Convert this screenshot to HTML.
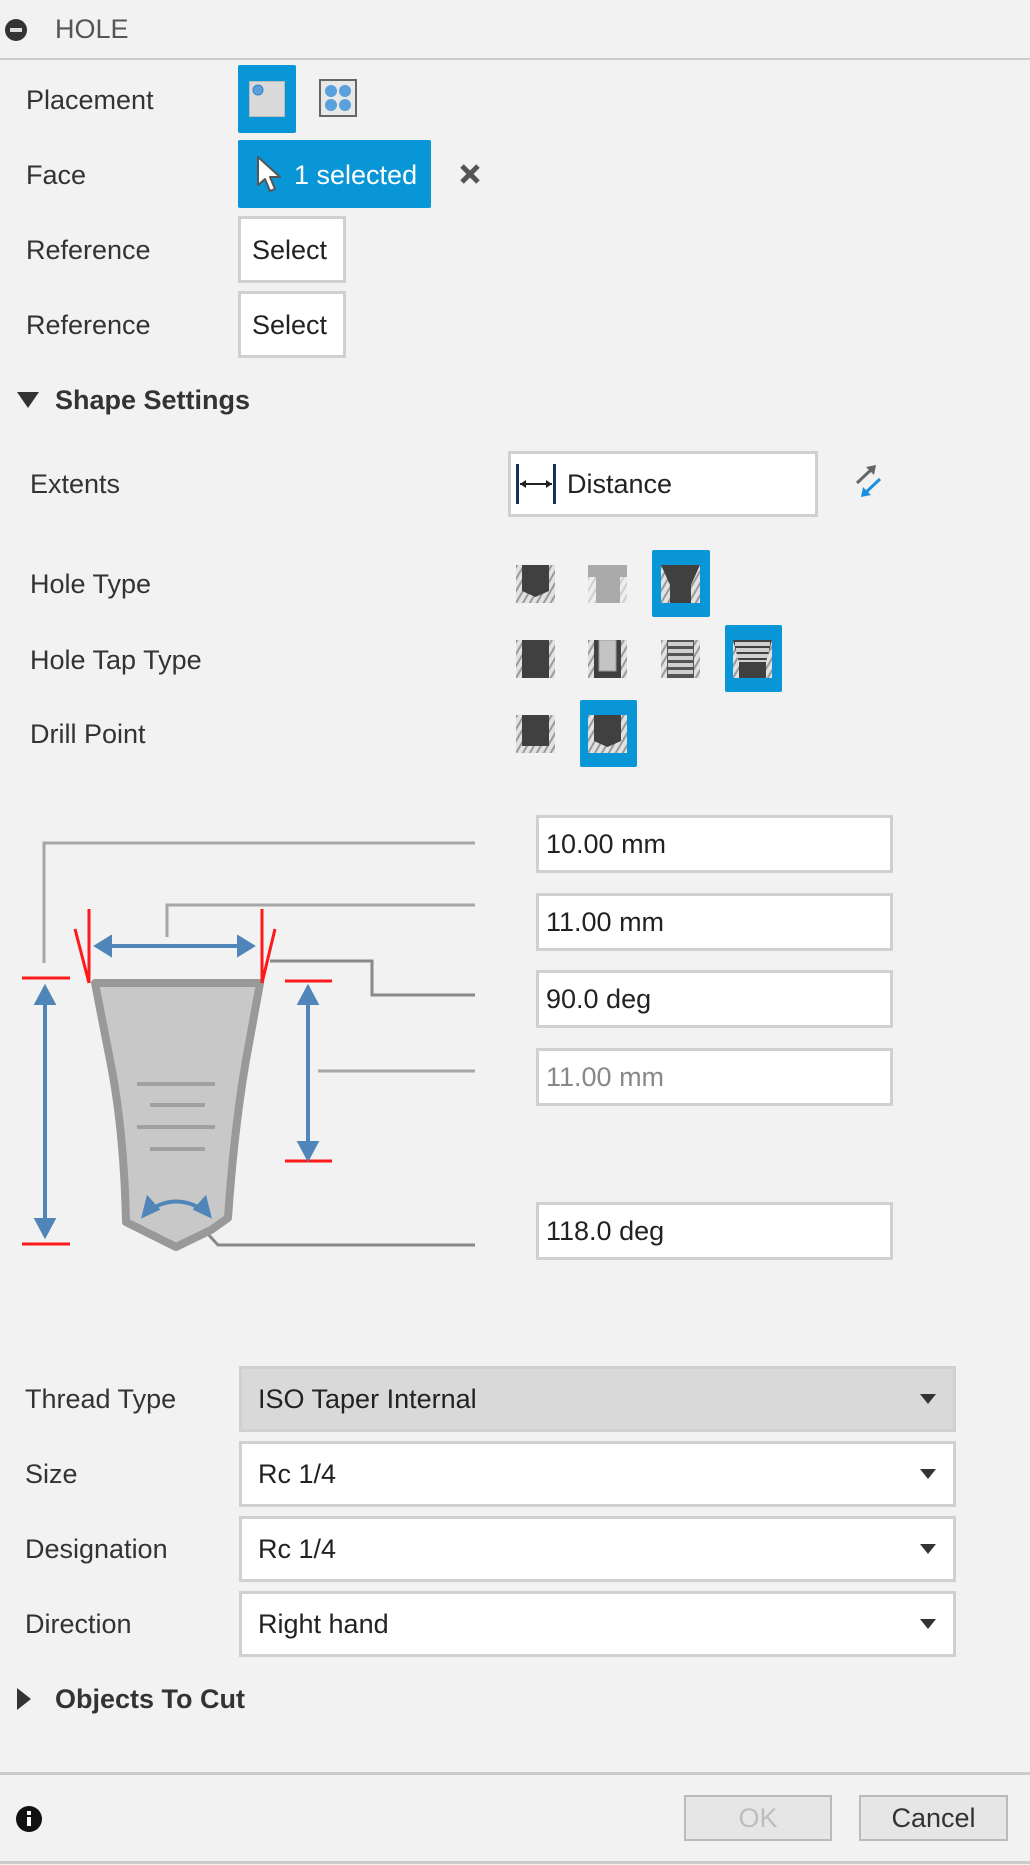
<!DOCTYPE html>
<html><head><meta charset="utf-8"><style>
*{margin:0;padding:0;box-sizing:border-box}
body{width:1030px;height:1865px;background:#f2f2f2;position:relative;overflow:hidden;font-family:"Liberation Sans",Arial,sans-serif;color:#333;font-size:27px}
.a{position:absolute}
.l{position:absolute;height:32px;line-height:32px;white-space:nowrap;color:#333}
.box{position:absolute;background:#fff;border:3px solid #d0d0d0}
.inp{position:absolute;background:#fff;border:3px solid #d0d0d0;left:536px;width:357px;height:58px;line-height:52px;padding-left:7px;color:#222}
.dd{position:absolute;left:239px;width:717px;height:66px;background:#fff;border:3px solid #d0d0d0;line-height:60px;padding-left:16px;color:#222}
.dd:after{content:"";position:absolute;right:17px;top:25px;border-left:8px solid transparent;border-right:8px solid transparent;border-top:10px solid #333}
.blue{position:absolute;background:#0896d6;border-radius:2px}
</style></head><body>
<svg width="0" height="0" style="position:absolute"><defs>
<pattern id="h" width="6" height="6" patternUnits="userSpaceOnUse" patternTransform="rotate(30)"><rect width="6" height="6" fill="#e2e2e2"/><rect width="2" height="6" fill="#9a9a9a"/></pattern>
<pattern id="h2" width="6" height="6" patternUnits="userSpaceOnUse" patternTransform="rotate(30)"><rect width="6" height="6" fill="#eeeeee"/><rect width="2" height="6" fill="#cfcfcf"/></pattern>
</defs></svg>

<svg class="a" style="left:4px;top:18px" width="24" height="24"><circle cx="12" cy="12" r="11" fill="#333"/><rect x="6" y="10" width="12" height="4" fill="#ddd"/></svg>
<div class="l" style="left:55px;top:13px;color:#555;font-size:27px">HOLE</div>
<div class="a" style="left:0;top:58px;width:1030px;height:2px;background:#ccc"></div>

<div class="l" style="left:26px;top:84px">Placement</div>
<div class="blue" style="left:238px;top:65px;width:58px;height:68px"></div>
<div class="a" style="left:249px;top:81px;width:36px;height:36px;background:#d9d9d9;border:1px solid #bbb"></div>
<svg class="a" style="left:249px;top:81px" width="36" height="36"><circle cx="9" cy="9" r="5" fill="#5aa0dc" stroke="#3b7fc0"/></svg>
<svg class="a" style="left:319px;top:79px" width="38" height="38"><rect x="1" y="1" width="36" height="36" fill="#e8e8e8" stroke="#666" stroke-width="2"/><circle cx="12" cy="12" r="6" fill="#5aa0dc"/><circle cx="26" cy="12" r="6" fill="#5aa0dc"/><circle cx="12" cy="26" r="6" fill="#5aa0dc"/><circle cx="26" cy="26" r="6" fill="#5aa0dc"/></svg>

<div class="l" style="left:26px;top:159px">Face</div>
<div class="blue" style="left:238px;top:140px;width:193px;height:68px"></div>
<svg class="a" style="left:256px;top:155px" width="28" height="40"><path d="M2 2 L2 30 L9 24 L14 36 L19 34 L14 22 L24 22 Z" fill="#fff" stroke="#555" stroke-width="2" stroke-linejoin="round"/></svg>
<div class="l" style="left:294px;top:159px;color:#fff">1 selected</div>
<svg class="a" style="left:459px;top:163px" width="22" height="22"><path d="M3 3 L19 19 M19 3 L3 19" stroke="#555" stroke-width="5"/></svg>

<div class="l" style="left:26px;top:234px">Reference</div>
<div class="box" style="left:238px;top:216px;width:108px;height:67px"></div>
<div class="l" style="left:252px;top:234px;color:#222">Select</div>
<div class="l" style="left:26px;top:309px">Reference</div>
<div class="box" style="left:238px;top:291px;width:108px;height:67px"></div>
<div class="l" style="left:252px;top:309px;color:#222">Select</div>

<svg class="a" style="left:17px;top:392px" width="22" height="18"><path d="M0 0 H22 L11 16 Z" fill="#333"/></svg>
<div class="l" style="left:55px;top:384px;font-weight:bold">Shape Settings</div>

<div class="l" style="left:30px;top:468px">Extents</div>
<div class="box" style="left:508px;top:451px;width:310px;height:66px"></div>
<svg class="a" style="left:515px;top:463px" width="42" height="42"><rect x="1" y="1" width="3" height="40" fill="#1a2e5a"/><rect x="38" y="1" width="3" height="40" fill="#1a2e5a"/><path d="M5 21 H37" stroke="#222" stroke-width="2"/><path d="M5 21 L11 17 L11 25 Z M37 21 L31 17 L31 25 Z" fill="#222"/></svg>
<div class="l" style="left:567px;top:468px;color:#222">Distance</div>
<svg class="a" style="left:852px;top:462px" width="34" height="40"><path d="M5 21 L22 5" stroke="#666" stroke-width="3"/><path d="M24 3 L14 5 L22 13 Z" fill="#666"/><path d="M28 17 L11 33" stroke="#1e8fe0" stroke-width="3"/><path d="M9 35 L19 33 L11 25 Z" fill="#1e8fe0"/></svg>

<div class="l" style="left:30px;top:568px">Hole Type</div>
<div class="l" style="left:30px;top:644px">Hole Tap Type</div>
<div class="l" style="left:30px;top:718px">Drill Point</div>

<svg class="a" style="left:516px;top:565px" width="39" height="38"><rect width="39" height="38" fill="url(#h)"/><path d="M6 0 H33 V26 L19.5 32 L6 26 Z" fill="#404040"/></svg>
<svg class="a" style="left:588px;top:565px" width="39" height="38"><rect width="39" height="38" fill="url(#h2)"/><path d="M0 0 H39 V12 H32 V38 H8 V12 H0 Z" fill="#aaaaaa"/></svg>
<div class="blue" style="left:652px;top:550px;width:58px;height:67px"></div>
<svg class="a" style="left:661px;top:565px" width="39" height="38"><rect width="39" height="38" fill="url(#h)"/><path d="M0 0 H39 L30 20 V38 H9 V20 Z" fill="#404040"/></svg>

<svg class="a" style="left:516px;top:640px" width="39" height="38"><rect width="39" height="38" fill="url(#h)"/><rect x="6" y="0" width="27" height="38" fill="#404040"/></svg>
<svg class="a" style="left:588px;top:640px" width="39" height="38"><rect width="39" height="38" fill="url(#h)"/><rect x="6" y="0" width="27" height="38" fill="#404040"/><rect x="11" y="0" width="17" height="31" fill="#c4c4c4" stroke="#999"/></svg>
<svg class="a" style="left:661px;top:640px" width="39" height="38"><rect width="39" height="38" fill="url(#h)"/><rect x="6" y="0" width="27" height="38" fill="#555"/><g fill="#d0d0d0"><rect x="7" y="2" width="25" height="4"/><rect x="7" y="9" width="25" height="4"/><rect x="7" y="16" width="25" height="4"/><rect x="7" y="23" width="25" height="4"/><rect x="7" y="30" width="25" height="4"/></g></svg>
<div class="blue" style="left:725px;top:625px;width:57px;height:67px"></div>
<svg class="a" style="left:733px;top:640px" width="39" height="38"><rect width="39" height="38" fill="url(#h)"/><path d="M0 0 H39 L33 22 V38 H6 V22 Z" fill="#404040"/><g fill="#d0d0d0"><rect x="2" y="2" width="35" height="4"/><rect x="3" y="8" width="33" height="4"/><rect x="4" y="14" width="31" height="4"/><rect x="5" y="20" width="29" height="2"/></g></svg>

<svg class="a" style="left:516px;top:715px" width="39" height="38"><rect width="39" height="38" fill="url(#h)"/><rect x="6" y="0" width="27" height="31" fill="#404040"/></svg>
<div class="blue" style="left:580px;top:700px;width:57px;height:67px"></div>
<svg class="a" style="left:588px;top:715px" width="39" height="38"><rect width="39" height="38" fill="url(#h)"/><path d="M6 0 H33 V26 L19.5 32 L6 26 Z" fill="#404040"/></svg>

<svg class="a" style="left:0;top:800px" width="480" height="460">
<g fill="none" stroke="#a6a6a6" stroke-width="3">
<path d="M44 163 V43 H475"/>
<path d="M167 137 V105 H475"/>
<path d="M270 161 H372 V195 H475" stroke="#8a8a8a"/>
<path d="M318 271 H475"/>
<path d="M195 420 L218 445 H475" stroke="#888"/>
</g>
<path d="M95 183 H260 L246 260 Q234 330 228 418 L211 430 L176 447 L126 422 Q124 330 110 260 Z" fill="#c8c8c8" stroke="#999" stroke-width="8" stroke-linejoin="round"/>
<g stroke="#a0a0a0" stroke-width="4"><path d="M137 284 H215 M150 305 H205 M137 327 H215 M150 349 H205"/></g>
<g stroke="#ff1a1a" stroke-width="3" fill="none">
<path d="M22 178 H70 M22 444 H70 M285 181 H332 M285 361 H332"/>
<path d="M89 109 V183 M262 109 V183 M75 129 L89 183 M275 129 L262 183"/>
</g>
<g stroke="#5085ba" stroke-width="4" fill="#5085ba">
<path d="M105 146 H244" fill="none"/><path d="M97 146 L110 138 L110 154 Z M252 146 L239 138 L239 154 Z"/>
<path d="M45 198 V425" fill="none"/><path d="M45 188 L37 203 L53 203 Z M45 435 L37 420 L53 420 Z"/>
<path d="M308 198 V350" fill="none"/><path d="M308 188 L300 203 L316 203 Z M308 358 L300 343 L316 343 Z"/>
<path d="M150 410 Q176 393 203 410" fill="none"/><path d="M144 415 L148 399 L157 409 Z M209 415 L205 399 L196 409 Z"/>
</g>
</svg>

<div class="inp" style="top:815px">10.00 mm</div>
<div class="inp" style="top:893px">11.00 mm</div>
<div class="inp" style="top:970px">90.0 deg</div>
<div class="inp" style="top:1048px;color:#888">11.00 mm</div>
<div class="inp" style="top:1202px">118.0 deg</div>

<div class="l" style="left:25px;top:1383px">Thread Type</div>
<div class="dd" style="top:1366px;background:#d9d9d9">ISO Taper Internal</div>
<div class="l" style="left:25px;top:1458px">Size</div>
<div class="dd" style="top:1441px">Rc 1/4</div>
<div class="l" style="left:25px;top:1533px">Designation</div>
<div class="dd" style="top:1516px">Rc 1/4</div>
<div class="l" style="left:25px;top:1608px">Direction</div>
<div class="dd" style="top:1591px">Right hand</div>

<svg class="a" style="left:17px;top:1688px" width="16" height="22"><path d="M0 0 L14 11 L0 22 Z" fill="#333"/></svg>
<div class="l" style="left:55px;top:1683px;font-weight:bold">Objects To Cut</div>

<div class="a" style="left:0;top:1772px;width:1030px;height:3px;background:#ccc"></div>
<svg class="a" style="left:15px;top:1805px" width="30" height="30"><circle cx="14" cy="14" r="13" fill="#111"/><rect x="12" y="6" width="4" height="4" fill="#fff"/><rect x="12" y="12" width="4" height="9" fill="#fff"/></svg>
<div class="a" style="left:684px;top:1795px;width:148px;height:46px;border:2px solid #bbb;background:#e6e6e6;color:#bdbdbd;text-align:center;line-height:42px">OK</div>
<div class="a" style="left:859px;top:1795px;width:149px;height:46px;border:2px solid #bbb;background:#e6e6e6;color:#333;text-align:center;line-height:42px">Cancel</div>
<div class="a" style="left:0;top:1861px;width:1030px;height:3px;background:#ccc"></div>
</body></html>
